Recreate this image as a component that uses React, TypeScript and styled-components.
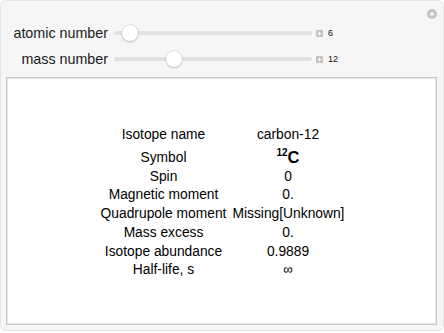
import React from "react";
import styled, { createGlobalStyle } from "styled-components";

const Global = createGlobalStyle`
  html, body { margin: 0; padding: 0; background: #ffffff; }
  body { font-family: "Liberation Sans", Arial, sans-serif; }
`;

const Panel = styled.div`
  position: relative;
  box-sizing: border-box;
  width: 444px;
  height: 331px;
  background: #f6f6f6;
  border: 1px solid #e4e4e4;
  border-radius: 6px;
  padding: 19px 6px 5px 5px;
  display: flex;
  flex-direction: column;
`;

const CornerButton = styled.div`
  position: absolute;
  top: 8px;
  right: 6px;
  width: 10px;
  height: 10px;
  border-radius: 50%;
  background: #c3c3c3;
  display: flex;
  align-items: center;
  justify-content: center;
`;

const Controls = styled.div`
  display: grid;
  grid-template-columns: 102px 198px auto;
  column-gap: 6px;
  grid-auto-rows: 26px;
  align-items: center;
  margin-bottom: 5px;
`;

const Label = styled.div`
  font-size: 14.3px;
  color: #1a1a1a;
  text-align: right;
  white-space: nowrap;
`;

const Track = styled.div`
  position: relative;
  height: 4px;
  border-radius: 2px;
  background: #e1e1e1;
`;

const Thumb = styled.div`
  position: absolute;
  top: 50%;
  width: 16px;
  height: 16px;
  margin-left: -8px;
  margin-top: -8px;
  border-radius: 50%;
  background: #ffffff;
  box-shadow: 0 0 0 0.5px #c9c9c9, 0 1px 2px rgba(0, 0, 0, 0.25);
`;

const ValueBox = styled.div`
  display: flex;
  align-items: center;
  gap: 5px;
  margin-left: -2px;
`;

const PlusSquare = styled.div`
  width: 7px;
  height: 7px;
  background: #c2c2c2;
  border-radius: 1px;
  display: flex;
  align-items: center;
  justify-content: center;
`;

const Value = styled.span`
  font-size: 9px;
  color: #111;
`;

const Output = styled.div`
  flex: 1;
  background: #ffffff;
  border: 1px solid #c6c6c6;
  box-shadow: inset 0 0 0 1px #e8e8e8;
  display: flex;
  align-items: center;
  justify-content: center;
`;

const Table = styled.div`
  display: grid;
  grid-template-columns: 128px 111px;
  column-gap: 5px;
  font-size: 13.8px;
  color: #000;
  margin-top: 4px;
`;

const Cell = styled.div<{ $tall?: boolean }>`
  text-align: center;
  white-space: nowrap;
  height: ${(p) => (p.$tall ? "23px" : "18.7px")};
  line-height: ${(p) => (p.$tall ? "25px" : "18.7px")};
`;

const Sym = styled.span`
  font-weight: bold;
  font-size: 16.5px;
`;

const Sup = styled.sup`
  font-size: 10px;
  vertical-align: 7px;
  line-height: 0;
`;

const Plus: React.FC<{ size: number }> = ({ size }) => (
  <svg width={size} height={size} viewBox="0 0 10 10">
    <path d="M5 2.2V7.8M2.2 5H7.8" stroke="#fff" strokeWidth="1.6" />
  </svg>
);

const sliders = [
  { label: "atomic number", value: 6, min: 1, max: 118 },
  { label: "mass number", value: 12, min: 6, max: 27 },
];

const rows: [string, React.ReactNode][] = [
  ["Isotope name", "carbon-12"],
  [
    "Symbol",
    <Sym>
      <Sup>12</Sup>C
    </Sym>,
  ],
  ["Spin", "0"],
  ["Magnetic moment", "0."],
  ["Quadrupole moment", "Missing[Unknown]"],
  ["Mass excess", "0."],
  ["Isotope abundance", "0.9889"],
  ["Half-life, s", "∞"],
];

export default function App() {
  return (
    <>
      <Global />
      <Panel>
        <CornerButton>
          <Plus size={8} />
        </CornerButton>
        <Controls>
          {sliders.map((s) => {
            const f = (s.value - s.min) / (s.max - s.min);
            return (
              <React.Fragment key={s.label}>
                <Label>{s.label}</Label>
                <Track>
                  <Thumb style={{ left: `calc(8px + ${f} * (100% - 16px))` }} />
                </Track>
                <ValueBox>
                  <PlusSquare>
                    <Plus size={7} />
                  </PlusSquare>
                  <Value>{s.value}</Value>
                </ValueBox>
              </React.Fragment>
            );
          })}
        </Controls>
        <Output>
          <Table>
            {rows.map(([k, v]) => (
              <React.Fragment key={k}>
                <Cell $tall={k === "Symbol"}>{k}</Cell>
                <Cell $tall={k === "Symbol"}>{v}</Cell>
              </React.Fragment>
            ))}
          </Table>
        </Output>
      </Panel>
    </>
  );
}
